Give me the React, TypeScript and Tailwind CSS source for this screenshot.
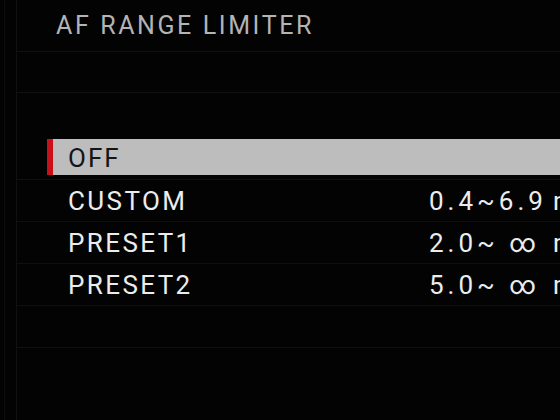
const rows = [
  { label: 'OFF', value: '' },
  { label: 'CUSTOM', value: '0.4~6.9', unit: 'm' },
  { label: 'PRESET1', value: '2.0~ ∞', unit: 'm' },
  { label: 'PRESET2', value: '5.0~ ∞', unit: 'm' },
];

export default function App() {
  return (
    <div
      className="w-[560px] h-[420px] bg-[#030303] flex overflow-hidden"
      style={{ fontFamily: 'Roboto, "Liberation Sans", sans-serif' }}
    >
      {/* left frame stripes */}
      <div className="w-[5px] border-r border-[#0d0d0d]" />
      <div className="w-[12px] border-r border-[#101010]" />

      <div className="flex-1 flex flex-col">
        <div className="h-[52px] border-b border-[#111] pl-[39px] pt-[11px]">
          <div className="text-[25px] leading-[30px] tracking-[2.6px] text-[#b4b4b4]">
            AF RANGE LIMITER
          </div>
        </div>
        <div className="h-[41px] border-b border-[#111]" />
        <div className="h-[45px]" />

        {rows.map((row, i) => (
          <div key={row.label} className="h-[42px] border-b border-[#0f0f0f] pl-[30px]">
            {i === 0 ? (
              <div className="h-[36px] mt-[1px] flex items-center bg-[#bdbdbd] border-l-[6px] border-[#c8101a]">
                <span className="pl-[15px] pt-[2px] text-[26px] tracking-[2px] text-[#141414]">{row.label}</span>
              </div>
            ) : (
              <div className="h-[40px] pt-[3px] flex items-center justify-between">
                <span className="pl-[21px] text-[26px] tracking-[2.4px] text-[#ececec]">{row.label}</span>
                <span className="w-[131px] flex items-center text-[26px] text-[#ececec] whitespace-nowrap">
                  <span className="w-[124px] shrink-0 tracking-[4px]">{row.value}</span>
                  <span>{row.unit}</span>
                </span>
              </div>
            )}
          </div>
        ))}
        <div className="h-[42px] border-b border-[#0f0f0f]" />
      </div>
    </div>
  );
}
